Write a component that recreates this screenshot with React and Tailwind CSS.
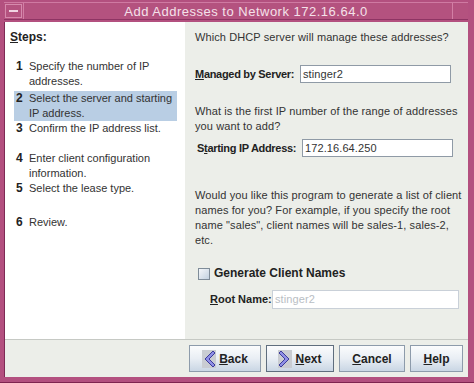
import React from 'react';

const font = { fontFamily: '"Liberation Sans", Arial, sans-serif' };

const U = ({ children }) => <span className="underline underline-offset-[1px]">{children}</span>;

const steps = [
  { n: 1, lines: ['Specify the number of IP', 'addresses.'], mt: 'mt-0' },
  { n: 2, lines: ['Select the server and starting', 'IP address.'], mt: 'mt-[2px]', active: true },
  { n: 3, lines: ['Confirm the IP address list.'], mt: 'mt-0' },
  { n: 4, lines: ['Enter client configuration', 'information.'], mt: 'mt-[15px]' },
  { n: 5, lines: ['Select the lease type.'], mt: 'mt-0' },
  { n: 6, lines: ['Review.'], mt: 'mt-[19px]' },
];

const LeftArrow = () => (
  <svg width="14" height="18" viewBox="0 0 14 18" className="bg-[#c9ccd2]">
    <path d="M11 1 L3 9 L11 17 L13 15 L7 9 L13 3 Z" fill="#8f8fe6" stroke="#3b3b9a" strokeWidth="1" strokeLinejoin="round" />
  </svg>
);

const RightArrow = () => (
  <svg width="14" height="18" viewBox="0 0 14 18" className="bg-[#c9ccd2]">
    <path d="M3 1 L11 9 L3 17 L1 15 L7 9 L1 3 Z" fill="#8f8fe6" stroke="#3b3b9a" strokeWidth="1" strokeLinejoin="round" />
  </svg>
);

const Button = ({ children, className = '' }) => (
  <button
    className={`h-[27px] flex items-center justify-center gap-[3px] text-[12px] font-bold text-[#222] bg-gradient-to-b from-[#fbfcfd] via-[#e9eef4] to-[#c9d6e4] border ${className}`}
  >
    {children}
  </button>
);

export default function App() {
  return (
    <div style={font} className="w-[474px] h-[383px] overflow-hidden bg-[#b3507f] flex flex-col pl-[4px] pr-[6px] pt-[2px] pb-[5px] border-b border-[#7e2450]">
      {/* title bar */}
      <div className="h-[18px] shrink-0 flex items-center border-t border-[#cf7aa2] border-b border-b-[#8e3463] bg-[#b4527f]">
        <div className="w-[17px] h-[14px] ml-[1px] border border-[#d68aad] flex items-center justify-center">
          <div className="w-[9px] h-[2px] bg-[#f0d4e2]" />
        </div>
        <div className="w-px h-full bg-[#d27fa5] ml-[1px]" />
        <div className="flex-1 text-center text-[13px] leading-none text-[#f4e1ea] tracking-[0.5px] pl-[16px]">
          Add Addresses to Network 172.16.64.0
        </div>
        <div className="w-px h-full bg-[#d27fa5] mr-[15px]" />
      </div>
      <div className="h-[2px] shrink-0" />

      <div className="h-[355px] flex flex-col border-l border-[#7e2a55]">
        <div className="h-[317px] flex overflow-hidden">
          {/* steps panel */}
          <div className="w-[180px] shrink-0 bg-white pt-[8px] pl-[5px] text-[11px] leading-[15px] text-[#333] whitespace-nowrap">
            <div className="font-bold text-[#222] text-[12px]">
              <U>S</U>teps:
            </div>
            <div className="mt-[14px] pr-[8px]">
              {steps.map((s) => (
                <div
                  key={s.n}
                  className={`${s.mt} flex ml-[4px] pl-[2px] ${s.active ? 'bg-[#b9cee4]' : ''}`}
                >
                  <span className="w-[13px] font-bold text-[#222] text-[12px]">{s.n}</span>
                  <div>
                    {s.lines.map((l) => (
                      <div key={l}>{l}</div>
                    ))}
                  </div>
                </div>
              ))}
            </div>
          </div>

          {/* form panel */}
          <div className="flex-1 bg-[#eceee9] pt-[8px] pl-[10px] text-[11px] leading-[15px] text-[#333] whitespace-nowrap tracking-[0.1px]">
            <div>Which DHCP server will manage these addresses?</div>

            <div className="mt-[20px] flex items-center">
              <span className="font-bold text-[#222] w-[105px] shrink-0 tracking-[-0.3px]">
                <U>M</U>anaged by Server:
              </span>
              <div className="w-[151px] h-[18px] bg-white border border-[#8f9aa6] pl-[2px] flex items-center">
                stinger2
              </div>
            </div>

            <div className="mt-[21px]">
              What is the first IP number of the range of addresses
              <br />
              you want to add?
            </div>

            <div className="mt-[5px] flex items-center pl-[2px]">
              <span className="font-bold text-[#222] w-[105px] shrink-0 tracking-[-0.3px]">
                S<U>t</U>arting IP Address:
              </span>
              <div className="w-[151px] h-[18px] bg-white border border-[#8f9aa6] pl-[2px] flex items-center">
                172.16.64.250
              </div>
            </div>

            <div className="mt-[31px]">
              Would you like this program to generate a list of client
              <br />
              names for you? For example, if you specify the root
              <br />
              name "sales", client names will be sales-1, sales-2,
              <br />
              etc.
            </div>

            <div className="mt-[18px] flex items-center pl-[3px]">
              <div className="w-[12px] h-[12px] border border-[#7f8c99] bg-gradient-to-br from-[#f5f7fa] to-[#c3d1e0]" />
              <span className="ml-[4px] font-bold text-[#222] text-[12px] tracking-normal">Generate Client Names</span>
            </div>

            <div className="mt-[9px] flex items-center pl-[15px]">
              <span className="font-bold text-[#222] w-[62px] shrink-0 tracking-normal">
                <U>R</U>oot Name:
              </span>
              <div className="w-[187px] h-[19px] bg-white border border-[#c9d0d8] pl-[2px] flex items-center text-[#b9bec4]">
                stinger2
              </div>
            </div>
          </div>
        </div>

        {/* button bar */}
        <div className="h-[38px] shrink-0 bg-[#eceee9] border-t border-[#c6c9c4] flex items-start justify-end pt-[5px] pr-[5px] gap-[5px]">
          <Button className="w-[72px] border-[#8d9bab]">
            <LeftArrow />
            <span>
              <U>B</U>ack
            </span>
          </Button>
          <Button className="w-[68px] border-[#5f6e7e]">
            <RightArrow />
            <span>
              <U>N</U>ext
            </span>
          </Button>
          <Button className="w-[66px] border-[#8d9bab]">
            <span>
              <U>C</U>ancel
            </span>
          </Button>
          <Button className="w-[53px] border-[#8d9bab]">
            <span>
              <U>H</U>elp
            </span>
          </Button>
        </div>
      </div>
    </div>
  );
}
